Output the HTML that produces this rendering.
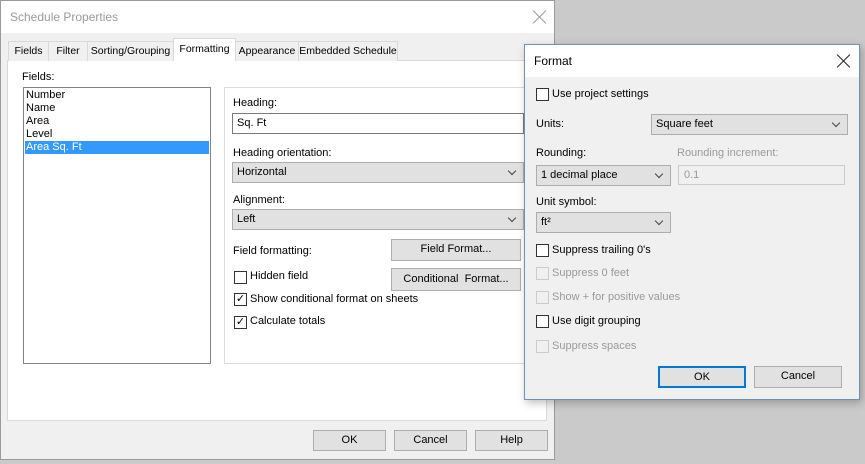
<!DOCTYPE html><html><head><style>
*{box-sizing:border-box;margin:0;padding:0}
body{width:865px;height:464px;background:#cacaca;font-family:"Liberation Sans",sans-serif;font-size:11px;color:#000;position:relative;overflow:hidden}
.a{position:absolute;white-space:nowrap}
.dlg{position:absolute;background:#f0f0f0;border:1px solid #9a9a9a}
.tb{position:absolute;left:0;top:0;right:0;background:#fff}
.tab{position:absolute;top:40px;height:20px;border:1px solid #d9d9d9;border-bottom:none;background:#f0f0f0;padding-top:3px;text-align:center;white-space:nowrap;overflow:hidden;font-size:10.5px}
.btn{position:absolute;background:#e1e1e1;border:1px solid #adadad;text-align:center;line-height:19px}
.sel{position:absolute;background:#e1e1e1;border:1px solid #adadad;padding-left:4px;line-height:18px}
.sel:after{content:"";position:absolute;right:8px;top:5px;width:5px;height:5px;border-right:1px solid #444;border-bottom:1px solid #444;transform:rotate(45deg)}
.inp{position:absolute;background:#fff;border:1px solid #7a7a7a;padding-left:4px;line-height:18px}
.cb{position:absolute;width:13px;height:13px;border:1px solid #333;background:#fff}
.cb.d{border-color:#ccc;background:#f0f0f0}
.g{color:#9a9a9a}
.x{position:absolute;width:14px;height:14px}
.x:before,.x:after{content:"";position:absolute;left:6px;top:-2px;width:1px;height:18px;background:currentColor;transform:rotate(45deg)}
.x:after{transform:rotate(-45deg)}
</style></head><body>
<div class="dlg" style="left:0;top:0;width:555px;height:460px">
 <div class="tb" style="height:32px"></div>
 <div class="a" style="left:9px;top:9px;color:#999;font-size:12px">Schedule Properties</div>
 <div class="x" style="left:532px;top:9px;color:#999"></div>
 <div class="a" style="left:6px;top:59px;width:540px;height:361px;background:#fff;border:1px solid #d9d9d9"></div>
 <div class="tab" style="left:7px;width:41px">Fields</div>
 <div class="tab" style="left:47px;width:40px">Filter</div>
 <div class="tab" style="left:86px;width:87px">Sorting/Grouping</div>
 <div class="tab" style="left:172px;top:37px;height:23px;width:63px;background:#fff;padding-top:4px">Formatting</div>
 <div class="tab" style="left:234px;width:64px">Appearance</div>
 <div class="tab" style="left:297px;width:100px">Embedded Schedule</div>
 <div class="a" style="left:21px;top:70px">Fields:</div>
 <div class="a" style="left:22px;top:86px;width:188px;height:277px;border:1px solid #828282;background:#fff"></div>
 <div class="a" style="left:25px;top:88px;line-height:13px">Number<br>Name<br>Area<br>Level</div>
 <div class="a" style="left:24px;top:140px;width:184px;height:13px;background:#3399ff;color:#fff;padding-left:1px;line-height:13px">Area Sq. Ft</div>
 <div class="a" style="left:223px;top:86px;width:303px;height:277px;border:1px solid #dcdcdc"></div>
 <div class="a" style="left:232px;top:96px">Heading:</div>
 <div class="inp" style="left:231px;top:112px;width:292px;height:21px">Sq. Ft</div>
 <div class="a" style="left:232px;top:146px">Heading orientation:</div>
 <div class="sel" style="left:231px;top:161px;width:292px;height:21px">Horizontal</div>
 <div class="a" style="left:232px;top:193px">Alignment:</div>
 <div class="sel" style="left:231px;top:208px;width:292px;height:21px">Left</div>
 <div class="a" style="left:232px;top:244px">Field formatting:</div>
 <div class="btn" style="left:390px;top:238px;width:130px;height:22px">Field Format...</div>
 <div class="cb" style="left:233px;top:270px"></div><div class="a" style="left:249px;top:269px">Hidden field</div>
 <div class="btn" style="left:390px;top:267px;width:130px;height:23px;line-height:20px">Conditional&nbsp; Format...</div>
 <div class="cb" style="left:233px;top:292px;font-size:11px;line-height:10px;text-align:center">✓</div><div class="a" style="left:249px;top:292px">Show conditional format on sheets</div>
 <div class="cb" style="left:233px;top:315px;font-size:11px;line-height:10px;text-align:center">✓</div><div class="a" style="left:249px;top:314px">Calculate totals</div>
 <div class="btn" style="left:312px;top:429px;width:73px;height:21px">OK</div>
 <div class="btn" style="left:393px;top:429px;width:73px;height:21px">Cancel</div>
 <div class="btn" style="left:474px;top:429px;width:73px;height:21px">Help</div>
</div>
<div class="dlg" style="left:524px;top:44px;width:336px;height:356px;border-color:#6f8fb5;box-shadow:2px 3px 8px rgba(0,0,0,.25)">
 <div class="tb" style="height:32px"></div>
 <div class="a" style="left:9px;top:9px;font-size:12px">Format</div>
 <div class="x" style="left:312px;top:9px;color:#222"></div>
 <div class="cb" style="left:11px;top:43px"></div><div class="a" style="left:27px;top:43px">Use project settings</div>
 <div class="a" style="left:11px;top:73px">Units:</div>
 <div class="sel" style="left:126px;top:69px;width:197px;height:21px">Square feet</div>
 <div class="a" style="left:11px;top:102px">Rounding:</div>
 <div class="a g" style="left:152px;top:102px">Rounding increment:</div>
 <div class="sel" style="left:11px;top:120px;width:135px;height:21px">1 decimal place</div>
 <div class="a g" style="left:153px;top:120px;width:167px;height:20px;border:1px solid #ccc;padding-left:5px;line-height:18px">0.1</div>
 <div class="a" style="left:11px;top:151px">Unit symbol:</div>
 <div class="sel" style="left:11px;top:167px;width:135px;height:21px">ft²</div>
 <div class="cb" style="left:11px;top:199px"></div><div class="a" style="left:27px;top:199px">Suppress trailing 0's</div>
 <div class="cb d" style="left:11px;top:222px"></div><div class="a g" style="left:27px;top:222px">Suppress 0 feet</div>
 <div class="cb d" style="left:11px;top:246px"></div><div class="a g" style="left:27px;top:246px">Show + for positive values</div>
 <div class="cb" style="left:11px;top:270px"></div><div class="a" style="left:27px;top:270px">Use digit grouping</div>
 <div class="cb d" style="left:11px;top:295px"></div><div class="a g" style="left:27px;top:295px">Suppress spaces</div>
 <div class="btn" style="left:133px;top:321px;width:88px;height:22px;border:2px solid #0078d7;line-height:18px">OK</div>
 <div class="btn" style="left:229px;top:321px;width:88px;height:22px">Cancel</div>
</div>
</body></html>
